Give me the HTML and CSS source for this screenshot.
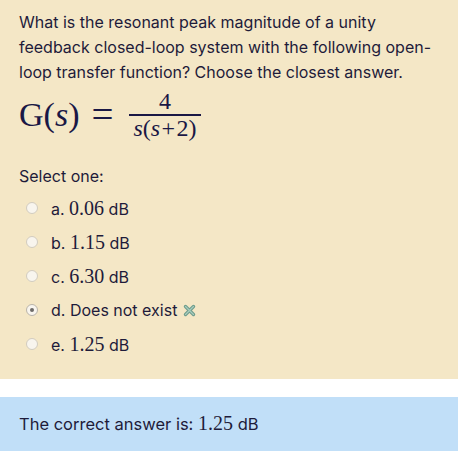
FILE: index.html
```html
<!DOCTYPE html>
<html>
<head>
<meta charset="utf-8">
<title>Question</title>
<link rel="stylesheet" href="styles.css">
</head>
<body>
<div class="que">
 <div class="qtext">
  <p>What is the resonant peak magnitude of a unity feedback closed-loop system with the following open-loop transfer function? Choose the closest answer.</p>
  <div class="formula">
   <span class="lhs">G(<i>s</i>)</span>
   <span class="eq">=</span>
   <span class="frac">
    <span class="num">4</span>
    <span class="den"><i>s</i>(<i>s</i><span class="op">+</span>2)</span>
   </span>
  </div>
 </div>

 <div class="prompt">Select one:</div>
 <div class="answer">
  <label class="opt"><span class="radio"></span><span>a. <span class="val">0.06</span> dB</span></label>
  <label class="opt"><span class="radio"></span><span>b. <span class="val">1.15</span> dB</span></label>
  <label class="opt"><span class="radio"></span><span>c. <span class="val">6.30</span> dB</span></label>
  <label class="opt"><span class="radio checked"></span><span>d. Does not exist</span>
   <svg class="wrong" width="13" height="13" viewBox="0 0 13 13"><path d="M2.5 2.5 L10.5 10.5 M10.5 2.5 L2.5 10.5" stroke="#6e9d8c" stroke-width="3.4" stroke-linecap="round"/><path d="M2.5 2.5 L10.5 10.5 M10.5 2.5 L2.5 10.5" stroke="#a9cdbf" stroke-width="1.1" stroke-linecap="round"/></svg>
  </label>
  <label class="opt"><span class="radio"></span><span>e. <span class="val">1.25</span> dB</span></label>
 </div>
</div>

<div class="feedback">
 The correct answer is: <span class="val">1.25</span> dB
</div>
</body>
</html>
```

FILE: styles.css
```css
body{
	margin: 0;
	background: #fff;
	font-family: "Inter", "Liberation Sans", sans-serif;
	font-size: 16px;
	color: #1e1b3a;
}

.que{
	background: #f4e7c6;
	padding: 10px 23px 18px 19px;
}

.qtext p{
	margin: 0;
	line-height: 25px;
}

/* formula */
.formula{
	display: flex;
	align-items: center;
	font-family: "Liberation Serif", serif;
	color: #1a1845;
	margin: 3px 0 0 0;
	height: 54px;
}
.lhs{
	font-size: 34px;
}
.lhs i, .den i{
	font-style: italic;
}
.eq{
	font-size: 39px;
	line-height: 40px;
	margin: 0 16px 0 12px;
}
.frac{
	display: flex;
	flex-direction: column;
	align-items: center;
	font-size: 24px;
}
.num{
	border-bottom: 2px solid #1a1845;
	width: 100%;
	text-align: center;
	line-height: 22px;
	padding-bottom: 2px;
}
.den{
	line-height: 24px;
	padding: 0 4px;
}
.op{
	margin: 0 0.06em;
}

.prompt{
	margin-top: 24px;
	line-height: 20px;
}

.answer{
	margin-top: 5px;
}
.opt{
	display: flex;
	align-items: center;
	height: 34px;
	padding-left: 7px;
}
.val{
	font-family: "Liberation Serif", serif;
	font-size: 20px;
}
.radio{
	width: 10px;
	height: 10px;
	border-radius: 50%;
	border: 1px solid #d2ccbf;
	background: #f8f5ee;
	margin-right: 13px;
	display: flex;
	align-items: center;
	justify-content: center;
}
.radio.checked{
	border-color: #b9b4aa;
}
.radio.checked::after{
	content: "";
	width: 4px;
	height: 4px;
	border-radius: 50%;
	background: #6d6b68;
}
.wrong{
	margin-left: 6px;
}

.feedback{
	margin-top: 18px;
	background: #c1dff8;
	padding: 16px 19px 18px;
	line-height: 20px;
	font-size: 16.5px;
}
```
